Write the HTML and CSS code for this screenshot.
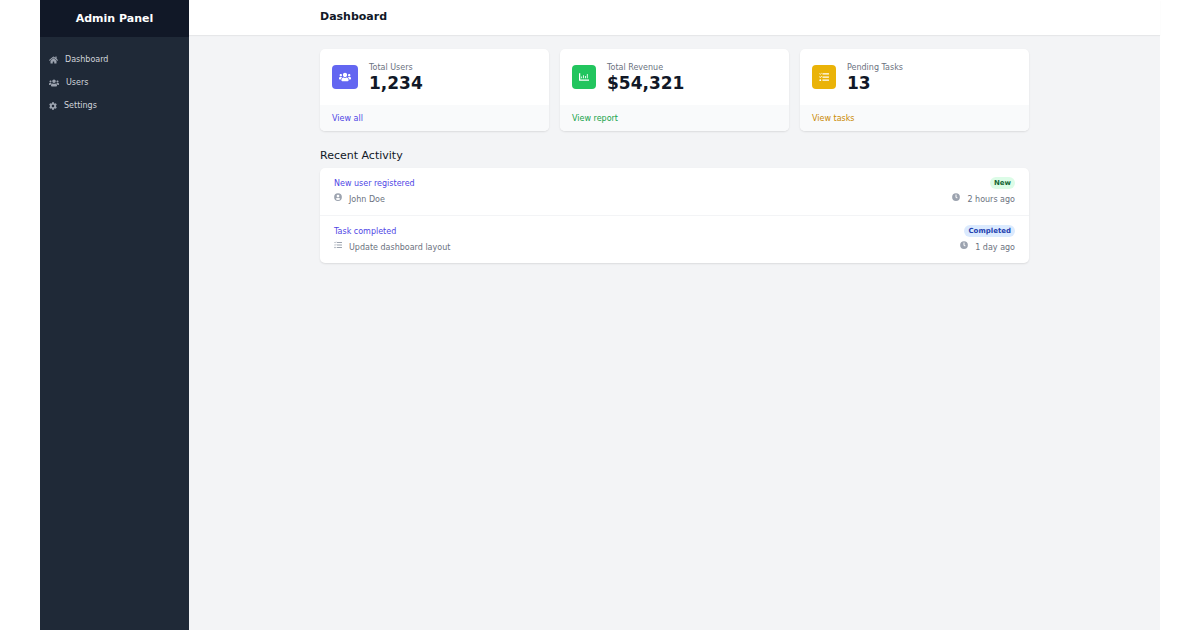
FILE: index.html
```html
<!DOCTYPE html>
<html lang="en">
<head>
    <meta charset="UTF-8">
    <meta name="viewport" content="width=device-width, initial-scale=1.0">
    <title>Admin Panel</title>
    <link rel="stylesheet" href="styles.css">
</head>
<body>
    <!-- shared icons -->
    <svg class="sprite" aria-hidden="true">
        <symbol id="icon-home" viewBox="0 0 576 512"><path d="M280.37 148.26L96 300.11V464a16 16 0 0 0 16 16l112.06-.29a16 16 0 0 0 15.92-16V368a16 16 0 0 1 16-16h64a16 16 0 0 1 16 16v95.64a16 16 0 0 0 16 16.05L464 480a16 16 0 0 0 16-16V300L295.67 148.26a12.19 12.19 0 0 0-15.3 0zM571.6 251.47L488 182.56V44.05a12 12 0 0 0-12-12h-56a12 12 0 0 0-12 12v72.61L318.47 43a48 48 0 0 0-61 0L4.34 251.47a12 12 0 0 0-1.6 16.9l25.5 31A12 12 0 0 0 45.15 301l235.22-193.74a12.19 12.19 0 0 1 15.3 0L530.9 301a12 12 0 0 0 16.9-1.6l25.5-31a12 12 0 0 0-1.7-16.93z"/></symbol>
        <symbol id="icon-users" viewBox="0 0 640 512"><path d="M96 224c35.3 0 64-28.7 64-64s-28.7-64-64-64-64 28.7-64 64 28.7 64 64 64zm448 0c35.3 0 64-28.7 64-64s-28.7-64-64-64-64 28.7-64 64 28.7 64 64 64zm32 32h-64c-17.6 0-33.5 7.1-45.1 18.6 40.3 22.1 68.9 62 75.1 109.4h66c17.7 0 32-14.3 32-32v-32c0-35.3-28.7-64-64-64zm-256 0c61.9 0 112-50.1 112-112S381.9 32 320 32 208 82.1 208 144s50.1 112 112 112zm76.8 32h-8.3c-20.8 10-43.9 16-68.5 16s-47.6-6-68.5-16h-8.3C179.6 288 128 339.6 128 403.2V432c0 26.5 21.5 48 48 48h288c26.5 0 48-21.5 48-48v-28.8c0-63.6-51.6-115.2-115.2-115.2zm-223.7-13.4C161.5 263.1 145.6 256 128 256H64c-35.3 0-64 28.7-64 64v32c0 17.7 14.3 32 32 32h65.9c6.3-47.4 34.9-87.3 75.2-109.4z"/></symbol>
        <symbol id="icon-cog" viewBox="0 0 512 512"><path d="M487.4 315.7l-42.6-24.6c4.3-23.2 4.3-47 0-70.2l42.6-24.6c4.9-2.8 7.1-8.6 5.5-14-11.1-35.6-30-67.8-54.7-94.6-3.8-4.1-10-5.1-14.8-2.3L380.8 110c-17.9-15.4-38.5-27.3-60.8-35.1V25.8c0-5.6-3.9-10.5-9.4-11.7-36.7-8.2-74.3-7.8-109.2 0-5.5 1.2-9.4 6.1-9.4 11.7V75c-22.2 7.9-42.8 19.8-60.8 35.1L88.7 85.5c-4.9-2.8-11-1.9-14.8 2.3-24.7 26.7-43.6 58.9-54.7 94.6-1.7 5.4.6 11.2 5.5 14L67.3 221c-4.3 23.2-4.3 47 0 70.2l-42.6 24.6c-4.9 2.8-7.1 8.6-5.5 14 11.1 35.6 30 67.8 54.7 94.6 3.8 4.1 10 5.1 14.8 2.3l42.6-24.6c17.9 15.4 38.5 27.3 60.8 35.1v49.2c0 5.6 3.9 10.5 9.4 11.7 36.7 8.2 74.3 7.8 109.2 0 5.5-1.2 9.4-6.1 9.4-11.7v-49.2c22.2-7.9 42.8-19.8 60.8-35.1l42.6 24.6c4.9 2.8 11 1.9 14.8-2.3 24.7-26.7 43.6-58.9 54.7-94.6 1.5-5.5-.7-11.3-5.6-14.1zM256 336c-44.1 0-80-35.9-80-80s35.9-80 80-80 80 35.9 80 80-35.9 80-80 80z"/></symbol>
        <symbol id="icon-chart" viewBox="0 0 512 512"><path d="M0 64h64v320h448v64H16a16 16 0 0 1-16-16zM115 236h43v84h-43zM211 172h43v148h-43zM307 204h43v116h-43zM403 96h43v224h-43z"/></symbol>
        <symbol id="icon-tasks" viewBox="0 0 512 512"><path d="M176 64h320a16 16 0 0 1 16 16v32a16 16 0 0 1-16 16H176zM176 224h320a16 16 0 0 1 16 16v32a16 16 0 0 1-16 16H176zM176 384h320a16 16 0 0 1 16 16v32a16 16 0 0 1-16 16H176zM139 37l17 17-91 91L3 83l24-25 38 38zM139 197l17 17-91 91-62-62 24-25 38 38z"/><circle cx="64" cy="416" r="48"/></symbol>
        <symbol id="icon-user" viewBox="0 0 512 512"><path fill-rule="evenodd" d="M256 8a248 248 0 1 0 0 496 248 248 0 0 0 0-496zm0 96a88 88 0 1 1 0 176 88 88 0 0 1 0-176zm0 344c-59 0-111-27-147-69 19-35 56-59 99-59 14 0 24 8 48 8s34-8 48-8c43 0 80 24 99 59-36 42-88 69-147 69z"/></symbol>
        <symbol id="icon-clock" viewBox="0 0 512 512"><path fill-rule="evenodd" d="M256 8a248 248 0 1 0 0 496 248 248 0 0 0 0-496zm-32 92h64v148l74 59-40 50-86-68q-12-10-12-25z"/></symbol>
    </svg>

    <div class="layout">
        <aside class="sidebar">
            <div class="sidebar-header">Admin Panel</div>
            <nav class="sidebar-nav">
                <a href="#"><svg class="icon icon-home"><use href="#icon-home"/></svg>Dashboard</a>
                <a href="#"><svg class="icon icon-wide"><use href="#icon-users"/></svg>Users</a>
                <a href="#"><svg class="icon"><use href="#icon-cog"/></svg>Settings</a>
            </nav>
        </aside>

        <div class="content">
            <header class="topbar">
                <div class="container">
                    <h1>Dashboard</h1>
                </div>
            </header>

            <main class="container">
                <div class="cards">
                    <div class="card">
                        <div class="card-body">
                            <div class="card-icon indigo"><svg class="users"><use href="#icon-users"/></svg></div>
                            <div>
                                <div class="card-label">Total Users</div>
                                <div class="card-value">1,234</div>
                            </div>
                        </div>
                        <div class="card-footer"><a href="#" class="link-indigo">View all</a></div>
                    </div>
                    <div class="card">
                        <div class="card-body">
                            <div class="card-icon green"><svg><use href="#icon-chart"/></svg></div>
                            <div>
                                <div class="card-label">Total Revenue</div>
                                <div class="card-value">$54,321</div>
                            </div>
                        </div>
                        <div class="card-footer"><a href="#" class="link-green">View report</a></div>
                    </div>
                    <div class="card">
                        <div class="card-body">
                            <div class="card-icon yellow"><svg><use href="#icon-tasks"/></svg></div>
                            <div>
                                <div class="card-label">Pending Tasks</div>
                                <div class="card-value">13</div>
                            </div>
                        </div>
                        <div class="card-footer"><a href="#" class="link-yellow">View tasks</a></div>
                    </div>
                </div>

                <h2>Recent Activity</h2>
                <ul class="activity">
                    <li>
                        <div class="row">
                            <a href="#" class="link-indigo">New user registered</a>
                            <span class="badge badge-green">New</span>
                        </div>
                        <div class="row details">
                            <span class="meta"><svg class="icon"><use href="#icon-user"/></svg>John Doe</span>
                            <span class="meta"><svg class="icon"><use href="#icon-clock"/></svg>2 hours ago</span>
                        </div>
                    </li>
                    <li>
                        <div class="row">
                            <a href="#" class="link-indigo">Task completed</a>
                            <span class="badge badge-blue">Completed</span>
                        </div>
                        <div class="row details">
                            <span class="meta"><svg class="icon"><use href="#icon-tasks"/></svg>Update dashboard layout</span>
                            <span class="meta"><svg class="icon"><use href="#icon-clock"/></svg>1 day ago</span>
                        </div>
                    </li>
                </ul>
            </main>
        </div>
    </div>
</body>
</html>
```

FILE: styles.css
```css
* {
    box-sizing: border-box;
}
body {
    margin: 0;
    padding: 0 40px;
    background-color: #fff;
    color: #111827;
    font-family: "DejaVu Sans", sans-serif;
    font-size: 8px;
    line-height: 13px;
}
a {
    text-decoration: none;
}
h1, h2 {
    margin: 0;
    font-size: 11px;
    line-height: 16px;
}
svg {
    display: block;
    fill: currentColor;
}
.sprite {
    display: none;
}
.icon {
    width: 8px;
    height: 8px;
    flex-shrink: 0;
    color: #9ca3af;
}
.icon-home {
    width: 9px;
}
.icon-wide {
    width: 10px;
}
.layout {
    display: flex;
    min-height: 100vh;
}

/* sidebar */
.sidebar {
    width: 149px;
    flex-shrink: 0;
    background-color: #1f2937;
}
.sidebar-header {
    padding: 10px;
    background-color: #111827;
    color: #fff;
    font-size: 11px;
    font-weight: bold;
    line-height: 17px;
    text-align: center;
}
.sidebar-nav {
    padding: 11px 0;
}
.sidebar-nav a {
    display: flex;
    align-items: center;
    gap: 7px;
    padding: 5px 9px;
    color: #d1d5db;
}
.sidebar-nav a:hover {
    background-color: #374151;
}

/* content */
.content {
    flex: 1;
    background-color: #f3f4f6;
}
.container {
    max-width: 747px;
    margin: 0 auto;
    padding: 0 19px;
}
.topbar {
    padding: 9px 0 10px;
    background-color: #fff;
    box-shadow: 0 1px 1px rgba(0, 0, 0, 0.05);
}
main.container {
    padding-top: 14px;
}

/* stat cards */
.cards {
    display: grid;
    grid-template-columns: repeat(3, 1fr);
    gap: 11px;
}
.card, .activity {
    overflow: hidden;
    border-radius: 5px;
    background-color: #fff;
    box-shadow: 0 1px 2px rgba(0, 0, 0, 0.1);
}
.card-body {
    display: flex;
    align-items: center;
    gap: 11px;
    padding: 12px;
}
.card-icon {
    padding: 7px;
    border-radius: 4px;
    color: #fff;
}
.card-icon svg {
    width: 10px;
    height: 10px;
}
.card-icon svg.users {
    width: 12px;
}
.indigo {
    background-color: #6366f1;
}
.green {
    background-color: #22c55e;
}
.yellow {
    background-color: #eab308;
}
.card-label {
    color: #6b7280;
}
.card-value {
    font-size: 17px;
    font-weight: bold;
    line-height: 19px;
}
.card-footer {
    padding: 7px 12px 6px;
    background-color: #f9fafb;
}
.link-indigo {
    color: #4f46e5;
}
.link-green {
    color: #16a34a;
}
.link-yellow {
    color: #ca8a04;
}

/* recent activity */
h2 {
    margin: 17px 0 4px;
    font-weight: normal;
}
.activity {
    margin: 0;
    padding: 0;
    list-style: none;
}
.activity li {
    padding: 9px 14px;
}
.activity li + li {
    border-top: 1px solid #f3f4f6;
}
.row {
    display: flex;
    align-items: flex-start;
    justify-content: space-between;
}
.details {
    margin-top: 3px;
    color: #6b7280;
}
.meta {
    display: flex;
    gap: 7px;
}
.badge {
    padding: 0 4px;
    border-radius: 6px;
    font-size: 7px;
    font-weight: bold;
    line-height: 12px;
}
.badge-green {
    background-color: #dcfce7;
    color: #166534;
}
.badge-blue {
    background-color: #dbeafe;
    color: #1e40af;
}
```
